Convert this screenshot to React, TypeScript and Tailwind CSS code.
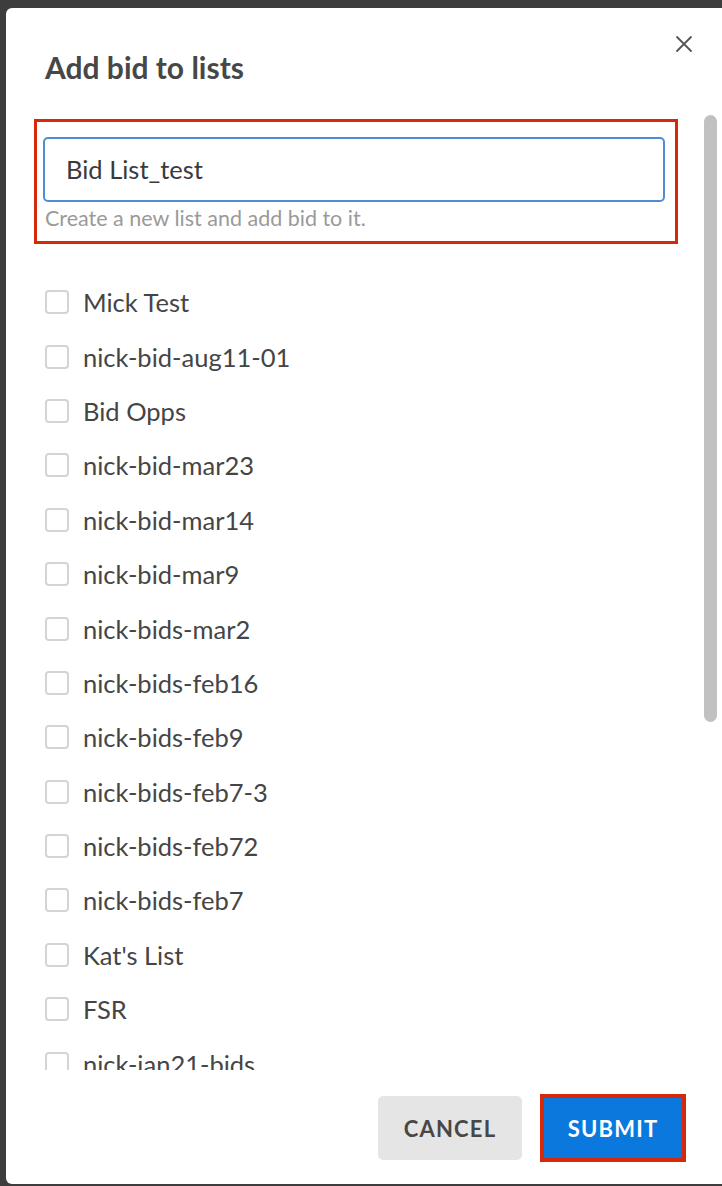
import React from "react";

const items = [
  "Mick Test",
  "nick-bid-aug11-01",
  "Bid Opps",
  "nick-bid-mar23",
  "nick-bid-mar14",
  "nick-bid-mar9",
  "nick-bids-mar2",
  "nick-bids-feb16",
  "nick-bids-feb9",
  "nick-bids-feb7-3",
  "nick-bids-feb72",
  "nick-bids-feb7",
  "Kat's List",
  "FSR",
  "nick-jan21-bids",
];

export default function App() {
  return (
    <div
      className="h-[1186px] w-[722px] overflow-hidden bg-[#3d3d3d] pt-[8px] pl-[6px]"
      style={{ fontFamily: "Lato, 'Open Sans', sans-serif" }}
    >
      <div className="relative flex h-[1176px] w-[724px] flex-col rounded-[6px] bg-white">
        <button className="absolute left-[668px] top-[26px] flex h-[20px] w-[20px] items-center justify-center text-[#555]">
          <svg width="18" height="18" viewBox="0 0 18 18" fill="none" stroke="#555" strokeWidth="1.8" strokeLinecap="round">
            <path d="M2 2 L16 16 M16 2 L2 16" />
          </svg>
        </button>
        <h2 className="pl-[39px] pt-[41px] text-[30px] leading-[36px] font-bold text-[#474747]">
          Add bid to lists
        </h2>
        <div className="mt-[30px] flex h-[955px]">
          <div className="w-[672px] overflow-hidden pt-[4px]">
            <div className="ml-[28px] w-[644px] border-[3px] border-[#d5290c] px-[6px] pt-[15px] pb-[10px]">
              <div className="flex h-[65px] w-[622px] items-center rounded-[5px] border-2 border-[#4a8fd4] pl-[21px] text-[25.5px] text-[#3a3a3a]">
                Bid List_test
              </div>
              <div className="mt-[3px] pl-[2px] text-[21.5px] leading-[26px] text-[#9a9a9a]">
                Create a new list and add bid to it.
              </div>
            </div>
            <div className="mt-[31px] pl-[39px]">
              {items.map((it) => (
                <div key={it} className="flex h-[54.4px] items-center gap-[14px]">
                  <div className="h-[24px] w-[24px] shrink-0 rounded-[4px] border-2 border-[#d4d4d4]" />
                  <span className="text-[25.5px] leading-[30px] text-[#454545]">{it}</span>
                </div>
              ))}
            </div>
          </div>
          <div className="ml-[26px] h-[607px] w-[13px] rounded-full bg-[#c1c1c1]" />
        </div>
        <div className="mt-[24px] flex items-center gap-[18px] pl-[372px]">
          <button className="h-[64px] w-[144px] rounded-[5px] bg-[#e5e5e5] text-[22px] font-bold tracking-[1.2px] text-[#474747]">
            CANCEL
          </button>
          <div className="border-[4px] border-[#d5290c]">
            <button className="h-[60px] w-[138px] bg-[#0b78de] text-[22px] font-bold tracking-[1.2px] text-white">
              SUBMIT
            </button>
          </div>
        </div>
      </div>
    </div>
  );
}
